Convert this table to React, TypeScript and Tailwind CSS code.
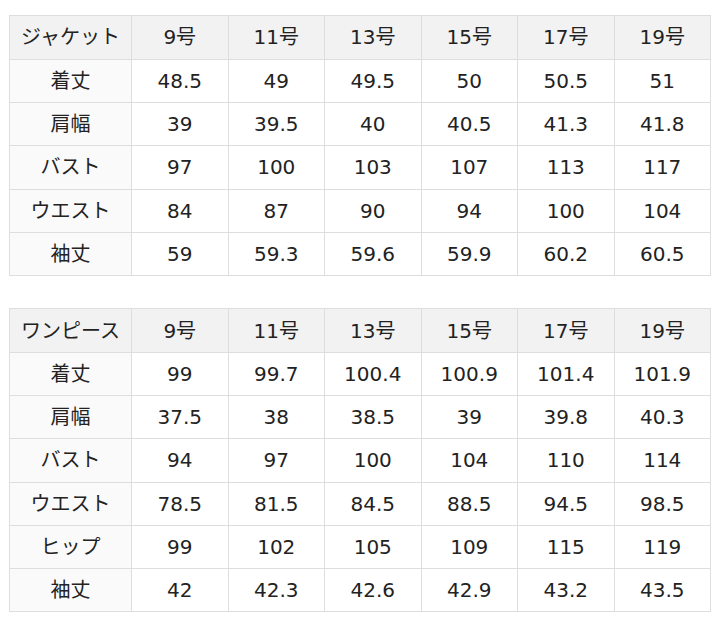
const jacket = {
  title: "ジャケット",
  sizes: ["9号", "11号", "13号", "15号", "17号", "19号"],
  rows: [
    ["着丈", "48.5", "49", "49.5", "50", "50.5", "51"],
    ["肩幅", "39", "39.5", "40", "40.5", "41.3", "41.8"],
    ["バスト", "97", "100", "103", "107", "113", "117"],
    ["ウエスト", "84", "87", "90", "94", "100", "104"],
    ["袖丈", "59", "59.3", "59.6", "59.9", "60.2", "60.5"],
  ],
};

const onepiece = {
  title: "ワンピース",
  sizes: ["9号", "11号", "13号", "15号", "17号", "19号"],
  rows: [
    ["着丈", "99", "99.7", "100.4", "100.9", "101.4", "101.9"],
    ["肩幅", "37.5", "38", "38.5", "39", "39.8", "40.3"],
    ["バスト", "94", "97", "100", "104", "110", "114"],
    ["ウエスト", "78.5", "81.5", "84.5", "88.5", "94.5", "98.5"],
    ["ヒップ", "99", "102", "105", "109", "115", "119"],
    ["袖丈", "42", "42.3", "42.6", "42.9", "43.2", "43.5"],
  ],
};

type Chart = typeof jacket;

function SizeTable({ chart, rowH }: { chart: Chart; rowH: string }) {
  return (
    <table className="w-[702px] table-fixed border-collapse text-[20px] text-[#222]">
      <colgroup>
        <col className="w-[122px]" />
        {chart.sizes.map((s) => (
          <col key={s} />
        ))}
      </colgroup>
      <thead>
        <tr className="h-[43.5px] bg-[#f2f2f2]">
          <th className="border border-[#dedede] p-0 text-center font-normal">{chart.title}</th>
          {chart.sizes.map((s) => (
            <th key={s} className="border border-[#dedede] p-0 text-center font-normal">
              {s}
            </th>
          ))}
        </tr>
      </thead>
      <tbody>
        {chart.rows.map((row) => (
          <tr key={row[0]} className={rowH}>
            {row.map((cell, i) => (
              <td
                key={i}
                className={`border border-[#dedede] p-0 text-center ${i === 0 ? "bg-[#fafafa]" : "bg-white"}`}
              >
                {cell}
              </td>
            ))}
          </tr>
        ))}
      </tbody>
    </table>
  );
}

export default function App() {
  return (
    <div
      className="min-h-screen bg-white pl-[9px] pt-[15px]"
      style={{ fontFamily: '"DejaVu Sans", "Noto Sans CJK JP", sans-serif' }}
    >
      <div className="flex flex-col gap-[32px]">
        <SizeTable chart={jacket} rowH="h-[43.4px]" />
        <SizeTable chart={onepiece} rowH="h-[43.2px]" />
      </div>
    </div>
  );
}
